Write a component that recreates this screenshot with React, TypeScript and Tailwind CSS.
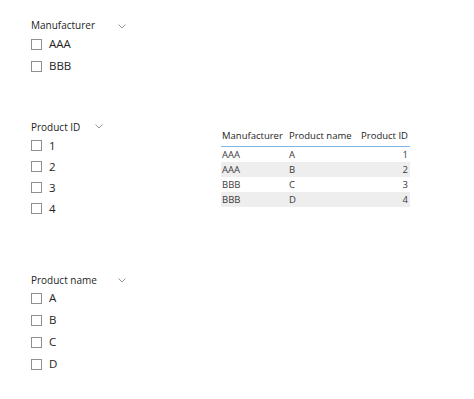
import React from 'react'

const font = { fontFamily: '"Segoe UI", "Open Sans", "Noto Sans", sans-serif' }

function Chevron({ className }: { className?: string }) {
	return (
		<svg
			className={className}
			width="8"
			height="5"
			viewBox="0 0 8 5"
			fill="none"
			stroke="#8a8a8a"
			strokeWidth="0.9"
		>
			<path d="M0.5 0.5 L4 4 L7.5 0.5" />
		</svg>
	)
}

function Slicer({
	title,
	items,
	rowH,
	headH,
	chevronClass,
}: {
	title: string
	items: string[]
	rowH: string
	headH: string
	chevronClass: string
}) {
	return (
		<div className="flex flex-col">
			<div className={`relative flex items-center text-[10px] text-[#252423] ${headH}`}>
				<span>{title}</span>
				<Chevron className={chevronClass} />
			</div>
			{items.map((item) => (
				<div key={item} className={`flex items-center gap-[7px] ${rowH}`}>
					<div className="h-[11px] w-[11px] border border-[#8f8f8f] bg-white" />
					<span className="text-[11.5px] text-[#252423]">{item}</span>
				</div>
			))}
		</div>
	)
}

const rows = [
	['AAA', 'A', '1'],
	['AAA', 'B', '2'],
	['BBB', 'C', '3'],
	['BBB', 'D', '4'],
]

export default function App() {
	return (
		<div className="flex h-[399px] w-[474px] bg-white" style={font}>
			<div className="flex w-[190px] flex-col pt-[18px] pl-[31px]">
				<Slicer
					title="Manufacturer"
					items={['AAA', 'BBB']}
					rowH="h-[22px]"
					headH="h-[15px]"
					chevronClass="absolute top-[6px] left-[87px]"
				/>
				<div className="mt-[42px]">
					<Slicer
						title="Product ID"
						items={['1', '2', '3', '4']}
						rowH="h-[21px]"
						headH="h-[16px]"
						chevronClass="absolute top-[5px] left-[64px]"
					/>
				</div>
				<div className="mt-[54px]">
					<Slicer
						title="Product name"
						items={['A', 'B', 'C', 'D']}
						rowH="h-[22px]"
						headH="h-[14px]"
						chevronClass="absolute top-[5px] left-[87px]"
					/>
				</div>
			</div>
			<div className="pt-[127px] pl-[31px]">
				<table className="w-[189px] table-fixed border-collapse text-[#252423]">
					<colgroup>
						<col className="w-[66px]" />
						<col className="w-[68px]" />
						<col className="w-[55px]" />
					</colgroup>
					<thead>
						<tr className="h-[19px] border-b-[1.5px] border-[#7fb8e6] text-[9.5px]">
							<th className="pl-[1px] text-left font-normal whitespace-nowrap">Manufacturer</th>
							<th className="pl-[2px] text-left font-normal whitespace-nowrap">Product name</th>
							<th className="pr-[2px] text-right font-normal whitespace-nowrap">Product ID</th>
						</tr>
					</thead>
					<tbody className="text-[9.5px] text-[#3a3a3a]">
						{rows.map((r, i) => (
							<tr
								key={i}
								className={`h-[15px] ${i % 2 === 1 ? 'bg-[#eeeeee]' : 'bg-white'}`}
							>
								<td className="pl-[1px] leading-[15px]">{r[0]}</td>
								<td className="pl-[2px] leading-[15px]">{r[1]}</td>
								<td className="pr-[2px] text-right leading-[15px]">{r[2]}</td>
							</tr>
						))}
					</tbody>
				</table>
			</div>
		</div>
	)
}
